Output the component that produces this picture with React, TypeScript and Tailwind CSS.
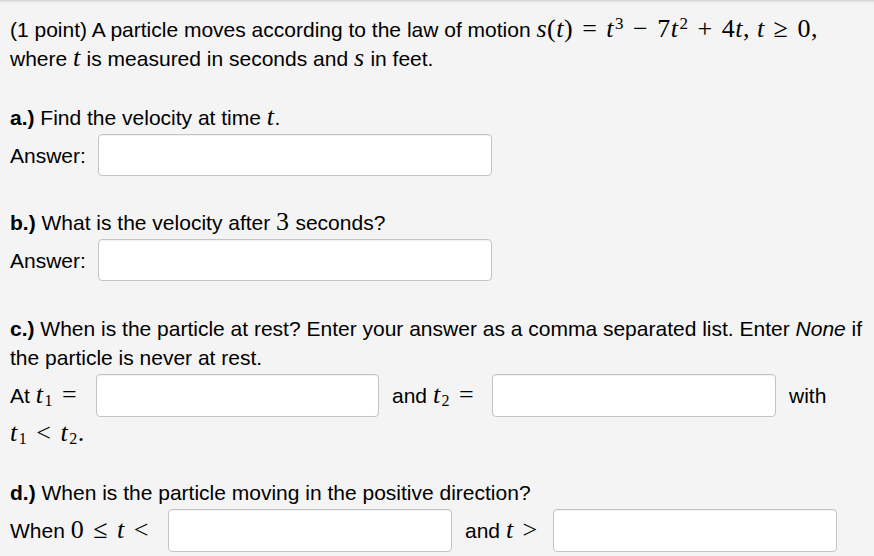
import React from "react"

// math pieces, serif italic like the TeX rendering
const M: React.FC<{ children: React.ReactNode }> = ({ children }) => (
  <span className="font-['Liberation_Serif','DejaVu_Serif',serif] text-[26px] leading-none tracking-[0.5px]">{children}</span>
)
const V: React.FC<{ children: React.ReactNode }> = ({ children }) => <i>{children}</i>
const Sub: React.FC<{ children: React.ReactNode }> = ({ children }) => (
  <sub className="text-[16px] relative top-[3px] not-italic ml-[1px]">{children}</sub>
)
const Sup: React.FC<{ children: React.ReactNode }> = ({ children }) => (
  <sup className="text-[17px] not-italic ml-[1px]">{children}</sup>
)
const Op: React.FC<{ children: React.ReactNode }> = ({ children }) => (
  <span className="mx-[9px]">{children}</span>
)

const Box: React.FC<{ w: string; h?: string; cls?: string }> = ({ w, h = "h-[43px]", cls = "" }) => (
  <input
    type="text"
    className={`${w} ${h} ${cls} shrink-0 bg-white border border-[#c4c4c4] rounded-[4px] shadow-[inset_0_1px_1px_rgba(0,0,0,0.06)] outline-none`}
  />
)

const App: React.FC = () => {
  return (
    <div className="w-[874px] h-[556px] overflow-hidden bg-[#f4f4f4] shadow-[inset_0_3px_3px_-2px_rgba(0,0,0,0.18)] text-black">
      <div className="pt-[15px] px-[10px] text-[21px] leading-[29px] font-['Liberation_Sans',Arial,sans-serif] whitespace-nowrap">
        {/* intro */}
        <p>
          (1 point) A particle moves according to the law of motion{" "}
          <M>
            <V>s</V>(<V>t</V>)<Op>=</Op><V>t</V>
            <Sup>3</Sup>
            <Op>−</Op>7<V>t</V>
            <Sup>2</Sup>
            <Op>+</Op>4<V>t</V>, <V>t</V>
            <Op>≥</Op>0,
          </M>
          <br />
          where <M><V>t</V></M> is measured in seconds and <M><V>s</V></M> in feet.
        </p>

        {/* a */}
        <p className="mt-[30px]">
          <b>a.)</b> Find the velocity at time <M><V>t</V></M>.
        </p>
        <div className="flex items-center h-[46px]">
          <span>Answer:</span>
          <Box w="w-[394px]" h="h-[42px]" cls="ml-[12px]" />
        </div>

        {/* b */}
        <p className="mt-[30px]">
          <b>b.)</b> What is the velocity after <M>3</M> seconds?
        </p>
        <div className="flex items-center h-[46px]">
          <span>Answer:</span>
          <Box w="w-[394px]" h="h-[42px]" cls="ml-[12px]" />
        </div>

        {/* c */}
        <p className="mt-[31px]">
          <b>c.)</b> When is the particle at rest? Enter your answer as a comma separated list. Enter <i>None</i> if
          <br />
          the particle is never at rest.
        </p>
        <div className="flex items-center h-[47px]">
          <span className="w-[86px] whitespace-nowrap">
            At <M><V>t</V><Sub>1</Sub><Op>=</Op></M>
          </span>
          <Box w="w-[283px]" />
          <span className="w-[113px] pl-[13px] whitespace-nowrap">
            and <M><V>t</V><Sub>2</Sub><Op>=</Op></M>
          </span>
          <Box w="w-[284px]" />
          <span className="pl-[13px]">with</span>
        </div>
        <p>
          <M>
            <V>t</V><Sub>1</Sub><Op>&lt;</Op><V>t</V><Sub>2</Sub>.
          </M>
        </p>

        {/* d */}
        <p className="mt-[30px]">
          <b>d.)</b> When is the particle moving in the positive direction?
        </p>
        <div className="flex items-center h-[47px]">
          <span className="w-[158px] whitespace-nowrap">
            When <M>0<Op>≤</Op><V>t</V><Op>&lt;</Op></M>
          </span>
          <Box w="w-[284px]" />
          <span className="w-[101px] pl-[13px] whitespace-nowrap">
            and <M><V>t</V><Op>&gt;</Op></M>
          </span>
          <Box w="w-[284px]" />
        </div>
      </div>
    </div>
  )
}

export default App
